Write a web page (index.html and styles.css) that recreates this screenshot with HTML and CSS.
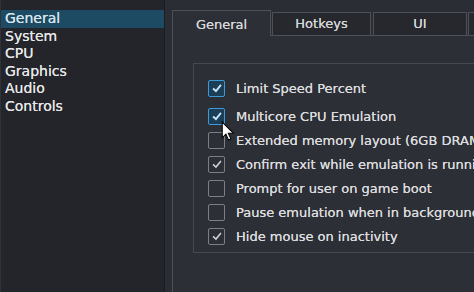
FILE: index.html
```html
<!DOCTYPE html>
<html lang="en">
<head>
  <meta charset="UTF-8" />
  <title>Configuration</title>
  <link rel="stylesheet" href="styles.css">
</head>
<body>

<div class="window">
  <div class="sidebar">
    <div class="nav-item active">General</div>
    <div class="nav-item">System</div>
    <div class="nav-item">CPU</div>
    <div class="nav-item">Graphics</div>
    <div class="nav-item">Audio</div>
    <div class="nav-item">Controls</div>
  </div>

  <div class="settings">
    <div class="tabs">
      <div class="tab active">General</div>
      <div class="tab">Hotkeys</div>
      <div class="tab">UI</div>
      <div class="tab">Debug</div>
    </div>

    <div class="pane">
      <div class="group">
        <label class="option first"><span class="box blue"><svg viewBox="0 0 16 16"><path d="M3.5 8.5 L6.8 11.5 L12.5 4.5" /></svg></span>Limit Speed Percent</label>
        <label class="option"><span class="box blue"><svg viewBox="0 0 16 16"><path d="M3.5 8.5 L6.8 11.5 L12.5 4.5" /></svg></span>Multicore CPU Emulation</label>
        <label class="option"><span class="box"></span>Extended memory layout (6GB DRAM)</label>
        <label class="option"><span class="box"><svg viewBox="0 0 16 16"><path d="M3.5 8.5 L6.8 11.5 L12.5 4.5" /></svg></span>Confirm exit while emulation is running</label>
        <label class="option"><span class="box"></span>Prompt for user on game boot</label>
        <label class="option"><span class="box"></span>Pause emulation when in background</label>
        <label class="option"><span class="box"><svg viewBox="0 0 16 16"><path d="M3.5 8.5 L6.8 11.5 L12.5 4.5" /></svg></span>Hide mouse on inactivity</label>
      </div>
    </div>
  </div>
</div>

<svg class="cursor" viewBox="0 0 12 19">
  <path d="M1 1 L1 16 L4.5 12.5 L7 18 L9.2 17 L6.8 11.6 L11.5 11.6 Z" />
</svg>

</body>
</html>
```

FILE: styles.css
```css
* {
  margin: 0;
  padding: 0;
  box-sizing: border-box;
  font-family: 'DejaVu Sans', sans-serif;
}

html, body {
  height: 100%;
  background: #2b2d34;
  color: #e2e2e2;
  overflow: hidden;
}

.window {
  display: flex;
  height: 100%;
  width: 100%;
  gap: 7px;
}

.sidebar {
  width: 165px;
  flex-shrink: 0;
  background: #24252b;
  border-right: 1px solid #1b1c21;
  border-left: 1px solid #30323a;
  padding-top: 10px;
}

.nav-item {
  height: 17.6px;
  line-height: 17.6px;
  padding-left: 4px;
  font-size: 14px;
  color: #e8e8e8;
  text-shadow: 0 0 0.4px #e8e8e8;
}

.nav-item.active {
  background: #1d4b64;
  color: #d6e6ee;
}

.settings {
  flex: 1;
  display: flex;
  flex-direction: column;
  overflow: hidden;
}

.tabs {
  display: flex;
  align-items: flex-end;
  height: 36px;
  gap: 1px;
  border-bottom: 1px solid #4e5059;
}

.tab {
  flex-shrink: 0;
  width: 99px;
  height: 23px;
  line-height: 21px;
  text-align: center;
  font-size: 13px;
  color: #d6d7d9;
  text-shadow: 0 0 0.4px #d6d7d9;
  background: #26282e;
  border: 1px solid #4e5059;
  border-bottom: none;
}

.tab:nth-child(3) {
  margin-left: 1px;
  width: 94px;
}

.tab.active {
  height: 26px;
  line-height: 27px;
  margin-bottom: -1px;
  background: #2d2f37;
}

.pane {
  flex: 1;
  background: #2d2f37;
  border-left: 1px solid #4e5059;
  padding: 27px 0 0 20px;
}

.group {
  border: 1px solid #474951;
  border-right: none;
  padding: 12px 0 3px 14px;
  height: 190px;
}

.option {
  display: flex;
  align-items: center;
  gap: 11px;
  height: 24px;
  font-size: 13px;
  color: #dcdcde;
  text-shadow: 0 0 0.4px #dcdcde;
  white-space: nowrap;
}

.option.first {
  margin-bottom: 4px;
}

.box {
  width: 17px;
  height: 17px;
  flex-shrink: 0;
  border: 1.5px solid #7d7f86;
  border-radius: 2px;
  display: flex;
  align-items: center;
  justify-content: center;
}

.box svg {
  width: 14px;
  height: 14px;
  fill: none;
  stroke: #cfd0d3;
  stroke-width: 1.8;
}

.box.blue {
  border-color: #3d9ad8;
  background: #1d3d55;
}

.box.blue svg {
  stroke: #bfe4ff;
  stroke-width: 2.2;
}

.cursor {
  position: absolute;
  left: 221px;
  top: 121px;
  width: 13px;
  height: 20px;
}

.cursor path {
  fill: #ffffff;
  stroke: #000000;
  stroke-width: 1;
}
```
